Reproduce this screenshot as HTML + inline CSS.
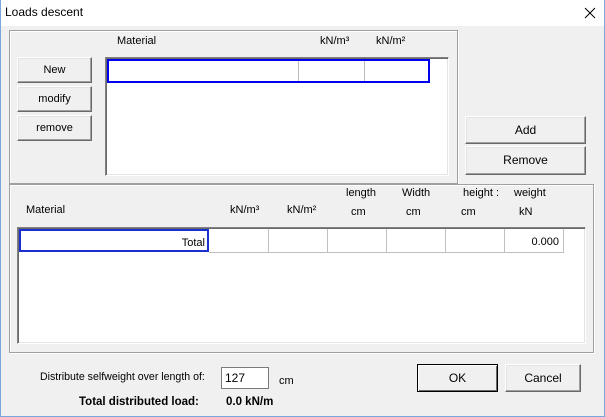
<!DOCTYPE html>
<html><head><style>
*{margin:0;padding:0;box-sizing:border-box}
body{width:605px;height:417px;background:#f0f0f0;font-family:"Liberation Sans",sans-serif;font-size:11px;color:#000;position:relative;overflow:hidden}
.a{position:absolute}
.win{left:0;top:0;width:605px;height:417px;border:1px solid #7aa7d9;border-top:none}
.title{left:1px;top:0;width:603px;height:26px;background:#fff}
.btn{position:absolute;background:#f0f0f0;border:1px solid;border-color:#fff #696969 #696969 #fff;box-shadow:inset -1px -1px 0 #a0a0a0,inset 1px 1px 0 #e3e3e3;text-align:center;font-size:11px}
.grp{border:1px solid #a0a0a0;box-shadow:inset 1px 1px 0 #fff,1px 1px 0 #fff}
.list{background:#fff;border:1px solid;border-color:#808080 #fff #fff #808080;box-shadow:inset 1px 1px 0 #696969,inset -1px -1px 0 #e3e3e3}
.cell{position:absolute;border-right:1px solid #c0c0c0;border-bottom:1px solid #c0c0c0;height:24px}
</style></head><body>
<div class="a win"></div>
<div class="a title"></div>
<div class="a" style="left:5px;top:5px;font-size:12px">Loads descent</div>
<svg class="a" style="left:584px;top:7px" width="12" height="12"><path d="M1 1L11 11M11 1L1 11" stroke="#000" stroke-width="1"/></svg>

<div class="a grp" style="left:9px;top:30px;width:449px;height:154px"></div>
<div class="a" style="left:117px;top:35px">Material</div>
<div class="a" style="left:320px;top:35px">kN/m³</div>
<div class="a" style="left:376px;top:35px">kN/m²</div>
<div class="btn" style="left:17px;top:57px;width:75px;height:26px;line-height:24px">New</div>
<div class="btn" style="left:17px;top:86px;width:75px;height:26px;line-height:24px">modify</div>
<div class="btn" style="left:17px;top:115px;width:75px;height:26px;line-height:24px">remove</div>
<div class="a list" style="left:105px;top:57px;width:344px;height:119px"></div>
<div class="a" style="left:107px;top:59px;width:323px;height:24px;border:2px solid #0000ee;background:#fff"></div>
<div class="a" style="left:298px;top:61px;width:1px;height:20px;background:#bbb"></div>
<div class="a" style="left:364px;top:61px;width:1px;height:20px;background:#bbb"></div>

<div class="btn" style="left:465px;top:116px;width:121px;height:28px;line-height:26px;font-size:12px">Add</div>
<div class="btn" style="left:465px;top:146px;width:121px;height:29px;line-height:27px;font-size:12px">Remove</div>

<div class="a grp" style="left:9px;top:184px;width:585px;height:169px"></div>
<div class="a" style="left:26px;top:204px">Material</div>
<div class="a" style="left:230px;top:204px">kN/m³</div>
<div class="a" style="left:287px;top:204px">kN/m²</div>
<div class="a" style="left:346px;top:187px">length</div>
<div class="a" style="left:351px;top:206px">cm</div>
<div class="a" style="left:402px;top:187px">Width</div>
<div class="a" style="left:406px;top:206px">cm</div>
<div class="a" style="left:463px;top:187px">height :</div>
<div class="a" style="left:461px;top:206px">cm</div>
<div class="a" style="left:514px;top:187px">weight</div>
<div class="a" style="left:519px;top:206px">kN</div>
<div class="a list" style="left:17px;top:227px;width:569px;height:117px"></div>
<div class="cell" style="left:209px;top:229px;width:60px"></div>
<div class="cell" style="left:269px;top:229px;width:59px"></div>
<div class="cell" style="left:328px;top:229px;width:59px"></div>
<div class="cell" style="left:387px;top:229px;width:59px"></div>
<div class="cell" style="left:446px;top:229px;width:59px"></div>
<div class="cell" style="left:505px;top:229px;width:59px;text-align:right;padding:7px 4px 0 0">0.000</div>
<div class="a" style="left:19px;top:229px;width:190px;height:23px;border:2px solid #1a2fd0;background:#fff;text-align:right;padding:6px 2px 0 0">Total</div>

<div class="a" style="left:40px;top:371px;font-size:10.6px">Distribute selfweight over length of:</div>
<div class="a" style="left:221px;top:367px;width:48px;height:22px;background:#fff;border:1px solid #7a7a7a;padding:3px 3px;font-size:12px">127</div>
<div class="a" style="left:279px;top:375px;font-size:11px">cm</div>
<div class="a" style="left:79px;top:396px;font-weight:bold;font-size:11.5px">Total distributed load:</div>
<div class="a" style="left:226px;top:396px;font-weight:bold;font-size:11.5px">0.0 kN/m</div>

<div class="btn" style="left:417px;top:364px;width:81px;height:28px;line-height:26px;font-size:12px;border-color:#000;box-shadow:inset 1px 1px 0 #fff,inset -1px -1px 0 #696969">OK</div>
<div class="btn" style="left:505px;top:364px;width:76px;height:28px;line-height:26px;font-size:12px">Cancel</div>
</body></html>
